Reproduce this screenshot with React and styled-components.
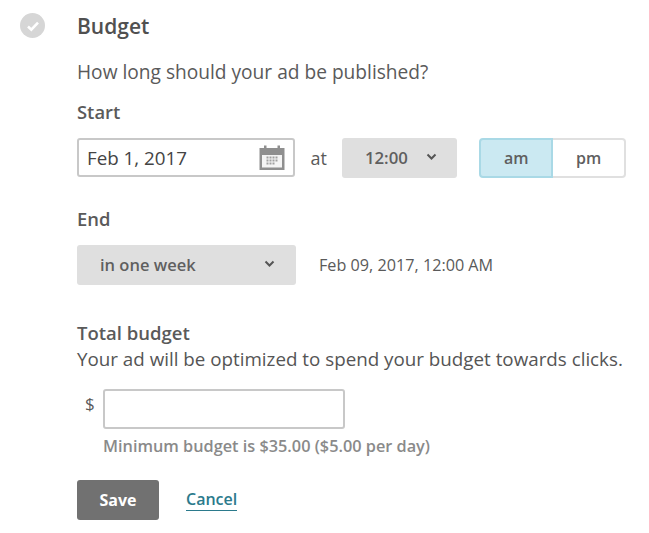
import React from 'react';
import styled, { createGlobalStyle } from 'styled-components';

const GlobalStyle = createGlobalStyle`
  html, body {
    margin: 0;
    background: #fff;
  }
  body {
    font-family: "Open Sans", "Liberation Sans", sans-serif;
    color: #555;
  }
`;

const Page = styled.div`
  width: 649px;
  height: 533px;
  overflow: hidden;
  display: flex;
  box-sizing: border-box;
  padding: 13px 0 0 20px;
`;

const StepBadge = styled.div`
  width: 25px;
  height: 25px;
  border-radius: 50%;
  background: #d6d6d6;
  display: flex;
  align-items: center;
  justify-content: center;
  flex-shrink: 0;
  margin-right: 32px;
`;

const Content = styled.div`
  display: flex;
  flex-direction: column;
  width: 560px;
`;

const Title = styled.h2`
  margin: 0;
  font-size: 21px;
  line-height: 26px;
  font-weight: 600;
  color: #505050;
`;

const Lead = styled.p`
  margin: 20px 0 0;
  font-size: 19.15px;
  line-height: 26px;
  color: #5a5a5a;
`;

const Label = styled.div`
  margin-top: ${(p) => p.$top}px;
  font-size: ${(p) => p.$size}px;
  line-height: 24px;
  font-weight: 600;
  color: #5a5a5a;
`;

const Row = styled.div`
  display: flex;
  align-items: center;
  margin-top: ${(p) => p.$top}px;
`;

const DateField = styled.div`
  width: 218px;
  height: 39px;
  margin-bottom: 1px;
  box-sizing: border-box;
  border: 2px solid #c8c8c8;
  border-radius: 3px;
  display: flex;
  align-items: center;
  justify-content: space-between;
  padding: 0 8px;
  font-size: 18.8px;
  color: #444;
`;

const AtText = styled.span`
  margin: 0 15px 0 15.5px;
  font-size: 18px;
  color: #5a5a5a;
`;

const Select = styled.div`
  width: ${(p) => p.$width}px;
  height: 40px;
  box-sizing: border-box;
  background: #dfdfdf;
  border-radius: 3px;
  display: flex;
  align-items: center;
  justify-content: space-between;
  padding: ${(p) => p.$padding};
  font-size: ${(p) => p.$size}px;
  font-weight: 600;
  color: #5f5f5f;
`;

const Toggle = styled.div`
  display: flex;
  width: 147px;
  height: 40px;
  margin-left: 22px;
`;

const ToggleOption = styled.div`
  flex: 1;
  box-sizing: border-box;
  display: flex;
  align-items: center;
  justify-content: center;
  padding-bottom: 1px;
  font-size: 16px;
  font-weight: 600;
  color: #5f5f5f;
  border: 2px solid ${(p) => (p.$active ? '#a9d9e6' : '#e0e0e0')};
  border-left-width: ${(p) => (p.$active ? 2 : 0)}px;
  border-radius: ${(p) => (p.$active ? '4px 0 0 4px' : '0 4px 4px 0')};
  background: ${(p) => (p.$active ? '#cbe9f2' : '#fff')};
`;

const EndDate = styled.span`
  margin-left: 23px;
  font-size: 16.2px;
  color: #5a5a5a;
`;

const Hint = styled.div`
  margin-top: 1px;
  font-size: 18.8px;
  line-height: 26px;
  color: #555;
`;

const Currency = styled.span`
  width: 26px;
  margin-bottom: 12px;
  padding-left: 8px;
  box-sizing: border-box;
  font-size: 17px;
  color: #5a5a5a;
`;

const AmountInput = styled.input`
  width: 242px;
  height: 40px;
  box-sizing: border-box;
  border: 2px solid #c8c8c8;
  border-radius: 3px;
  background: #fff;
  outline: none;
`;

const Minimum = styled.div`
  margin: 6px 0 0 26px;
  font-size: 16.3px;
  line-height: 22px;
  font-weight: 600;
  color: #8a8a8a;
`;

const Actions = styled.div`
  display: flex;
  align-items: center;
  margin-top: 23px;
`;

const SaveButton = styled.button`
  width: 82px;
  height: 40px;
  border: 0;
  border-radius: 3px;
  background: #717171;
  color: #fff;
  font-family: inherit;
  font-size: 16px;
  font-weight: 700;
`;

const CancelLink = styled.a`
  margin: 0 0 2px 27px;
  font-size: 16px;
  font-weight: 600;
  line-height: 22px;
  color: #2b7a8c;
  text-decoration: none;
  border-bottom: 1px solid #2b7a8c;
`;

const CheckIcon = () => (
  <svg width="14" height="12" viewBox="0 0 14 12">
    <path d="M2 6.5 5.3 9.6 12 2.6" fill="none" stroke="#fff" strokeWidth="2.6" />
  </svg>
);

const Chevron = () => (
  <svg width="11" height="8" viewBox="0 0 11 8">
    <path d="M1.5 1.5 5.5 5.5 9.5 1.5" fill="none" stroke="#555" strokeWidth="2" />
  </svg>
);

const CalendarIcon = () => (
  <svg width="26" height="26" viewBox="0 0 26 26">
    <rect x="0.5" y="3" width="25" height="22" fill="#8f8f8f" />
    <rect x="5" y="0.5" width="2.5" height="4" fill="#8f8f8f" />
    <rect x="18.5" y="0.5" width="2.5" height="4" fill="#8f8f8f" />
    <rect x="3" y="10" width="20" height="12.5" fill="#f4f4f4" />
    <path
      d="M7.5 11.5h2v2h-2zM10.5 11.5h2v2h-2zM13.5 11.5h2v2h-2zM16.5 11.5h2v2h-2zM7.5 14.5h2v2h-2zM10.5 14.5h2v2h-2zM13.5 14.5h2v2h-2zM16.5 14.5h2v2h-2zM7.5 17.5h2v2h-2zM10.5 17.5h2v2h-2zM13.5 17.5h2v2h-2z"
      fill="#a0a0a0"
    />
  </svg>
);

const App = () => (
  <>
    <GlobalStyle />
    <Page>
      <StepBadge>
        <CheckIcon />
      </StepBadge>
      <Content>
        <Title>Budget</Title>
        <Lead>How long should your ad be published?</Lead>
        <Label $top={15} $size={18.4}>Start</Label>
        <Row $top={14}>
          <DateField>
            Feb 1, 2017
            <CalendarIcon />
          </DateField>
          <AtText>at</AtText>
          <Select $width={115} $size={16.8} $padding="0 20px 2px 23px">
            12:00
            <Chevron />
          </Select>
          <Toggle>
            <ToggleOption $active>am</ToggleOption>
            <ToggleOption>pm</ToggleOption>
          </Toggle>
        </Row>
        <Label $top={29} $size={18.4}>End</Label>
        <Row $top={14}>
          <Select $width={219} $size={16.5} $padding="0 21px 2px 23px">
            in one week
            <Chevron />
          </Select>
          <EndDate>Feb 09, 2017, 12:00 AM</EndDate>
        </Row>
        <Label $top={36} $size={18.5}>Total budget</Label>
        <Hint>Your ad will be optimized to spend your budget towards clicks.</Hint>
        <Row $top={17}>
          <Currency>$</Currency>
          <AmountInput />
        </Row>
        <Minimum>Minimum budget is $35.00 ($5.00 per day)</Minimum>
        <Actions>
          <SaveButton>Save</SaveButton>
          <CancelLink href="#">Cancel</CancelLink>
        </Actions>
      </Content>
    </Page>
  </>
);

export default App;
